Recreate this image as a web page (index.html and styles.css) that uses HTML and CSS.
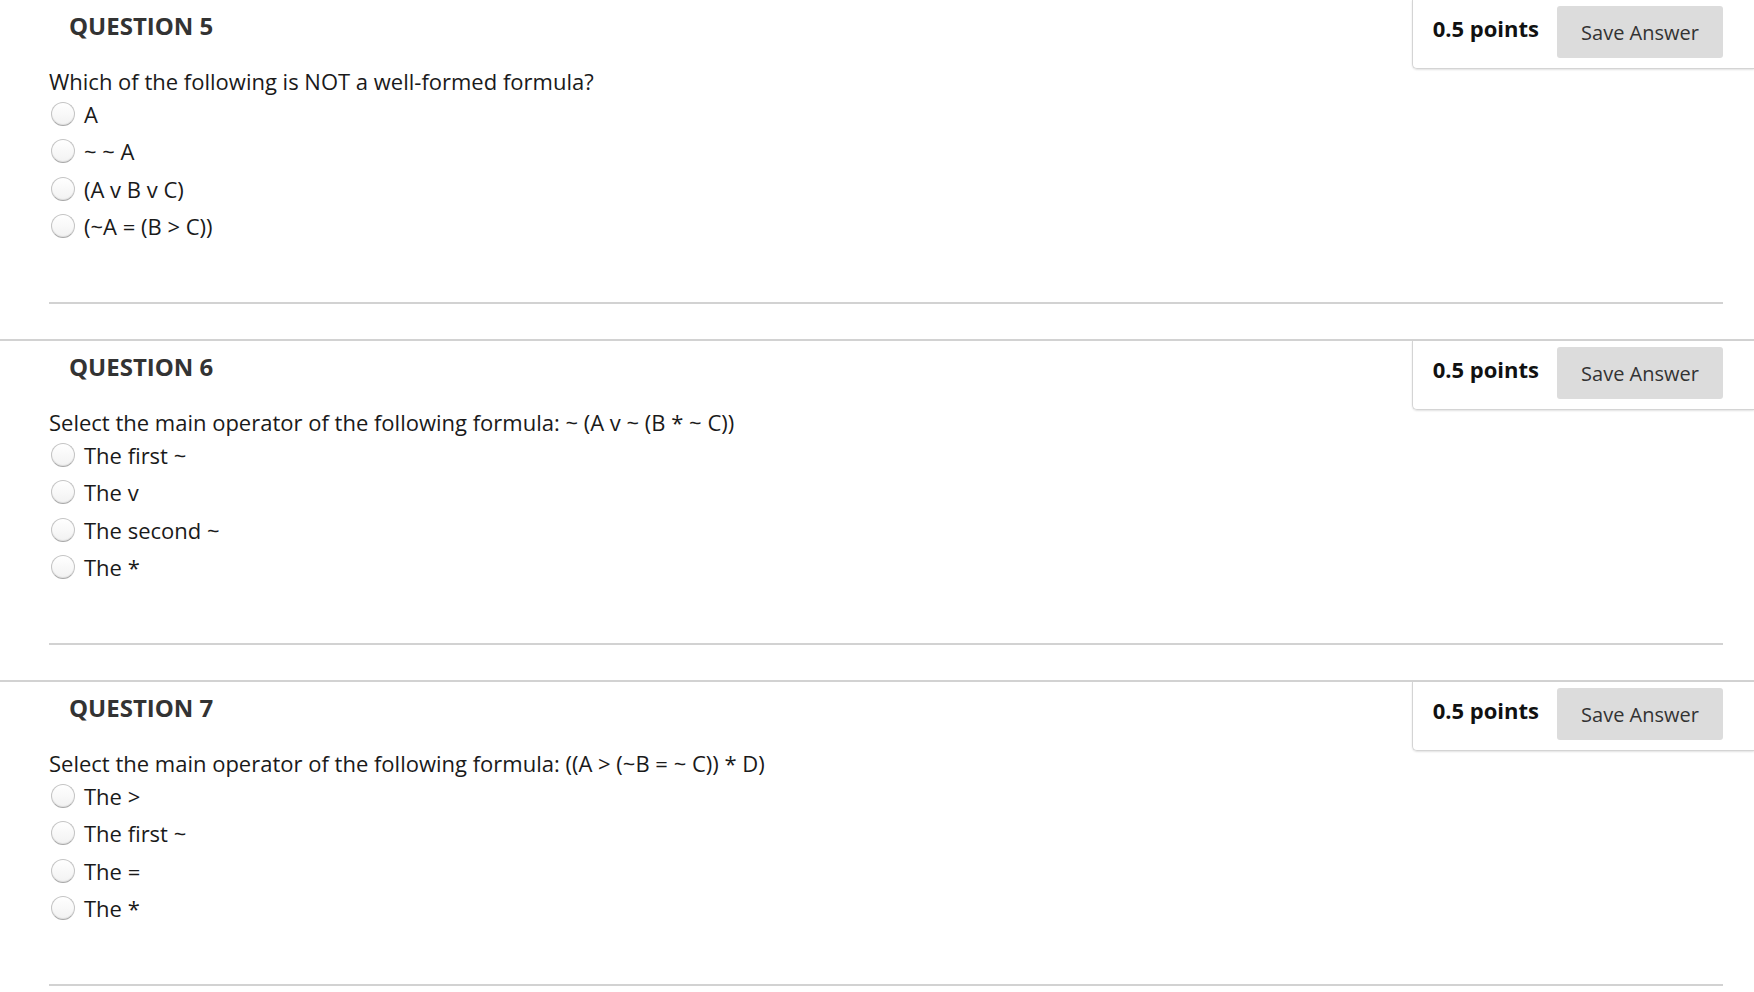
FILE: index.html
```html
<!DOCTYPE html>
<html lang="en">
<head>
    <meta charset="UTF-8">
    <title>Test</title>
    <link rel="stylesheet" href="styles.css">
</head>
<body>

    <div class="questions">

        <!-- Question 5 -->
        <section class="question">
            <div class="points-box">
                <span class="points">0.5 points</span>
                <button class="save-btn">Save Answer</button>
            </div>
            <h3 class="q-title">QUESTION 5</h3>
            <p class="q-text">Which of the following is NOT a well-formed formula?</p>
            <ul class="options">
                <li><span class="radio"></span>A</li>
                <li><span class="radio"></span>~ ~ A</li>
                <li><span class="radio"></span>(A v B v C)</li>
                <li><span class="radio"></span>(~A = (B &gt; C))</li>
            </ul>
            <hr class="divider">
        </section>

        <!-- Question 6 -->
        <section class="question">
            <div class="points-box">
                <span class="points">0.5 points</span>
                <button class="save-btn">Save Answer</button>
            </div>
            <h3 class="q-title">QUESTION 6</h3>
            <p class="q-text">Select the main operator of the following formula: ~ (A v ~ (B * ~ C))</p>
            <ul class="options">
                <li><span class="radio"></span>The first ~</li>
                <li><span class="radio"></span>The v</li>
                <li><span class="radio"></span>The second ~</li>
                <li><span class="radio"></span>The *</li>
            </ul>
            <hr class="divider">
        </section>

        <!-- Question 7 -->
        <section class="question">
            <div class="points-box">
                <span class="points">0.5 points</span>
                <button class="save-btn">Save Answer</button>
            </div>
            <h3 class="q-title">QUESTION 7</h3>
            <p class="q-text">Select the main operator of the following formula: ((A &gt; (~B = ~ C)) * D)</p>
            <ul class="options">
                <li><span class="radio"></span>The &gt;</li>
                <li><span class="radio"></span>The first ~</li>
                <li><span class="radio"></span>The =</li>
                <li><span class="radio"></span>The *</li>
            </ul>
            <hr class="divider">
        </section>

    </div>

</body>
</html>
```

FILE: styles.css
```css
body {
    font-family: "Open Sans", "Liberation Sans", sans-serif;
    margin: 0;
    padding: 0;
    height: 100vh;
    overflow: hidden;
    background: #fff;
    color: #1a1a1a;
}

.questions {
    margin-top: -2px;
}

/* One question block */
.question {
    border-top: 2px solid #d2d2d2;
    padding: 0 31px 0 49px;
    height: 339px;
}

/* Points + save button, sits top right */
.points-box {
    float: right;
    display: flex;
    align-items: center;
    margin-right: -31px;
    padding: 6px 31px 10px 20px;
    border: 1px solid #d4d4d4;
    border-top: none;
    border-right: none;
    border-bottom-left-radius: 5px;
    box-shadow: 0 1px 2px rgba(0, 0, 0, 0.12);
}
.points {
    font-size: 22px;
    font-weight: bold;
    color: #111;
    margin-right: 18px;
    margin-bottom: 9px;
}
.save-btn {
    font-family: inherit;
    font-size: 20px;
    color: #333;
    background: #dcdcdc;
    border: none;
    border-radius: 3px;
    width: 166px;
    height: 52px;
    padding: 0;
}

.q-title {
    margin: 0 0 0 20px;
    padding-top: 10px;
    font-size: 24px;
    line-height: 32px;
    font-weight: bold;
    color: #333;
}

.q-text {
    margin: 25px 0 0 0;
    font-size: 22px;
    line-height: 28px;
}

.options {
    list-style: none;
    margin: 0;
    padding: 0;
}
.options li {
    display: flex;
    align-items: center;
    height: 37.5px;
    font-size: 22px;
    padding-left: 2px;
}

/* Radio circle */
.radio {
    width: 22px;
    height: 22px;
    border-radius: 50%;
    border: 1px solid #c4c4c4;
    border-bottom-color: #a8a8a8;
    background: linear-gradient(#ffffff, #f2f2f2);
    box-shadow: inset 0 -1px 1px rgba(0, 0, 0, 0.08);
    margin-right: 9px;
    flex-shrink: 0;
}

.divider {
    clear: both;
    border: none;
    border-top: 2px solid #d2d2d2;
    margin: 57px 0 0 0;
}
```
